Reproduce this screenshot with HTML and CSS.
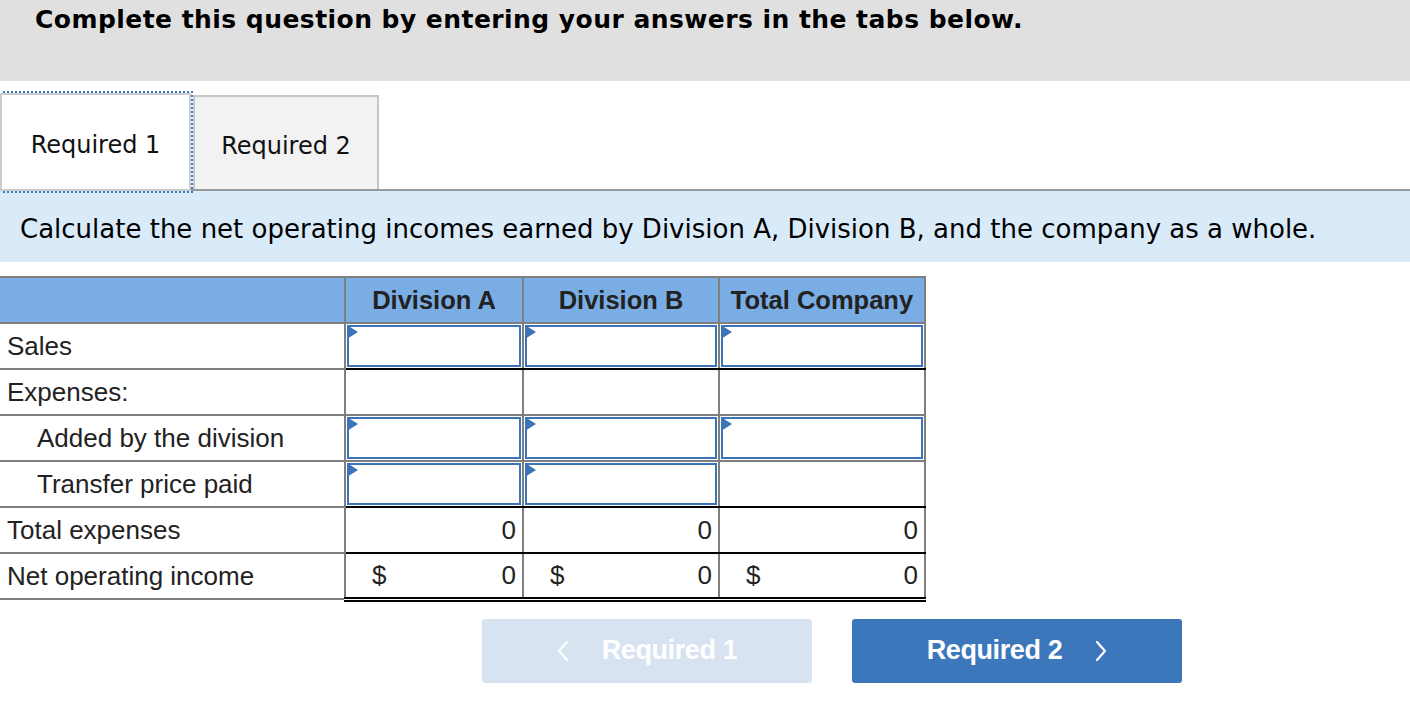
FILE: index.html
```html
<!DOCTYPE html>
<html>
<head>
<meta charset="utf-8">
<link rel="stylesheet" href="styles.css">
</head>
<body>
<div class="banner">Complete this question by entering your answers in the tabs below.</div>
<div class="tabs">
  <div class="tab tab-active">Required 1</div>
  <div class="tab tab-idle">Required 2</div>
</div>
<div class="instruction">Calculate the net operating incomes earned by Division A, Division B, and the company as a whole.</div>
<table class="grid">
  <colgroup>
    <col class="c-label"><col class="c-a"><col class="c-b"><col class="c-t">
  </colgroup>
  <thead>
    <tr class="head">
      <th></th><th>Division A</th><th>Division B</th><th class="last">Total Company</th>
    </tr>
  </thead>
  <tbody>
    <tr class="r-sales">
      <td class="label">Sales</td>
      <td class="cell dark"><div class="input"></div></td>
      <td class="cell dark"><div class="input"></div></td>
      <td class="cell dark last"><div class="input"></div></td>
    </tr>
    <tr>
      <td class="label">Expenses:</td>
      <td class="cell"></td>
      <td class="cell"></td>
      <td class="cell last"></td>
    </tr>
    <tr>
      <td class="label indent">Added by the division</td>
      <td class="cell"><div class="input"></div></td>
      <td class="cell"><div class="input"></div></td>
      <td class="cell last"><div class="input"></div></td>
    </tr>
    <tr>
      <td class="label indent">Transfer price paid</td>
      <td class="cell dark"><div class="input"></div></td>
      <td class="cell dark"><div class="input"></div></td>
      <td class="cell dark last"></td>
    </tr>
    <tr>
      <td class="label">Total expenses</td>
      <td class="cell dark num"><span class="val">0</span></td>
      <td class="cell dark num"><span class="val">0</span></td>
      <td class="cell dark num last"><span class="val">0</span></td>
    </tr>
    <tr>
      <td class="label">Net operating income</td>
      <td class="cell double num"><span class="cur">$</span><span class="val">0</span></td>
      <td class="cell double num"><span class="cur">$</span><span class="val">0</span></td>
      <td class="cell double num last"><span class="cur">$</span><span class="val">0</span></td>
    </tr>
  </tbody>
</table>
<div class="nav">
  <div class="btn btn-prev">
    <svg class="chev" width="12" height="22" viewBox="0 0 12 22"><path d="M10 2 L2 11 L10 20" fill="none" stroke="#fff" stroke-width="2.2" stroke-linecap="round" stroke-linejoin="round"/></svg>
    <span>Required 1</span>
  </div>
  <div class="btn btn-next">
    <span>Required 2</span>
    <svg class="chev" width="12" height="22" viewBox="0 0 12 22"><path d="M2 2 L10 11 L2 20" fill="none" stroke="#fff" stroke-width="2.2" stroke-linecap="round" stroke-linejoin="round"/></svg>
  </div>
</div>
</body>
</html>
```

FILE: styles.css
```css
* { box-sizing: border-box; }
body {
  margin: 0;
  background: #fff;
  font-family: "DejaVu Sans", Verdana, sans-serif;
  color: #000;
  width: 1410px;
}
.banner {
  height: 81px;
  background: #e0e0e0;
  padding: 5px 0 0 35px;
  font-weight: bold;
  font-size: 25px;
  letter-spacing: 0.45px;
  white-space: nowrap;
}
.tabs {
  display: flex;
  align-items: flex-end;
  margin-top: 14px;
  border-bottom: 2px solid #999;
  height: 96px;
}
.tab {
  display: flex;
  align-items: center;
  justify-content: center;
  font-size: 24px;
  color: #111;
  padding-top: 5px;
}
.tab-active {
  width: 191px;
  height: 98px;
  margin-bottom: -2px;
  background: #fff;
  border: 2px solid #ccc;
  outline: 2px dotted #3d79c0;
  outline-offset: 0;
  position: relative;
  z-index: 1;
}
.tab-idle {
  width: 186px;
  height: 94px;
  margin-left: 2px;
  background: #f2f2f2;
  border: 2px solid #c6c6c6;
  border-bottom: none;
}
.instruction {
  height: 71px;
  background: #d9ebf9;
  padding: 4px 0 0 20px;
  display: flex;
  align-items: center;
  font-size: 26px;
  white-space: nowrap;
}
.grid {
  margin-top: 14px;
  border-collapse: collapse;
  width: 925px;
  table-layout: fixed;
  font-family: "Liberation Sans", Arial, sans-serif;
  font-size: 26px;
  color: #222;
}
.c-label { width: 345px; }
.c-a { width: 178px; }
.c-b { width: 196px; }
.c-t { width: 206px; }
.grid th, .grid td {
  height: 46px;
  padding: 0;
  border-right: 2px solid #7f7f7f;
  border-bottom: 2px solid #7f7f7f;
}
.head th {
  background: #7aade4;
  border-top: 2px solid #7f7f7f;
  font-weight: bold;
  font-size: 25.5px;
  color: #222;
  text-align: center;
  height: 46px;
  white-space: nowrap;
}
.label {
  padding-left: 7px !important;
  white-space: nowrap;
}
.label.indent { padding-left: 37px !important; }
.cell { position: relative; }
.cell.dark { border-bottom: 2px solid #000 !important; }
.cell.double { border-bottom: 5px double #000 !important; }
.input {
  position: absolute;
  left: 1px;
  right: 1px;
  top: 1px;
  bottom: 1px;
  border: 2px solid #3d74b8;
  background: #fff;
}
.input::before {
  content: "";
  position: absolute;
  left: -2px;
  top: -2px;
  width: 11px;
  height: 14px;
  background: #3d74b8;
  clip-path: polygon(0 0, 100% 50%, 0 100%);
}
.num .val {
  position: absolute;
  right: 6px;
  top: 50%;
  transform: translateY(-50%);
}
.num .cur {
  position: absolute;
  left: 26px;
  top: 50%;
  transform: translateY(-50%);
}
.nav {
  display: flex;
  gap: 40px;
  margin: 17px 0 0 482px;
}
.btn {
  width: 330px;
  height: 64px;
  border-radius: 3px;
  display: flex;
  align-items: center;
  justify-content: center;
  gap: 33px;
  color: #fff;
  font-family: "Liberation Sans", Arial, sans-serif;
  font-weight: bold;
  font-size: 27px;
  letter-spacing: -0.4px;
}
.btn-prev { background: #d7e3f1; }
.btn-next { background: #3c76bb; }
.chev { display: block; }
```
